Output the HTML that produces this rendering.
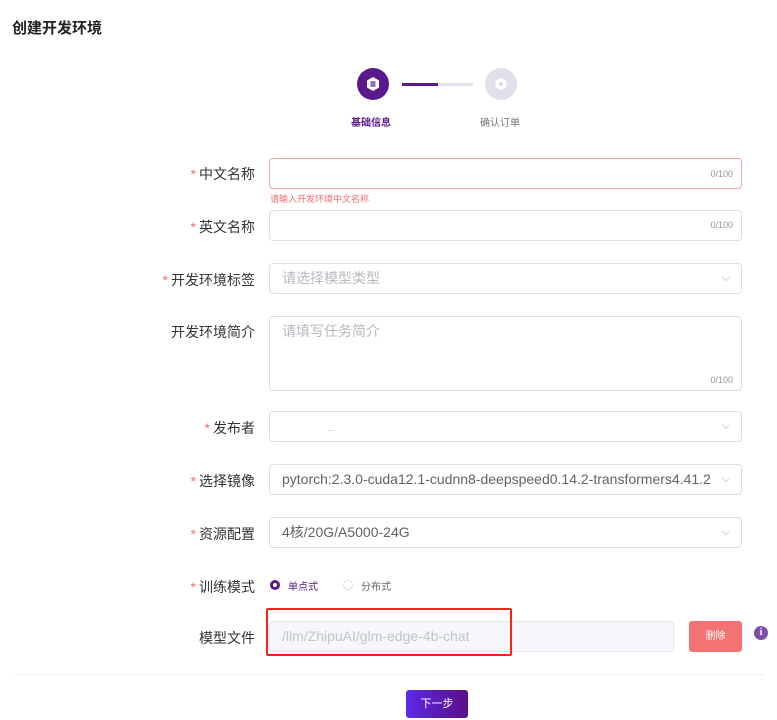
<!DOCTYPE html>
<html><head><meta charset="utf-8"><style>
*{box-sizing:border-box;margin:0;padding:0}
body{width:777px;height:720px;background:#fff;font-family:"Liberation Sans","Noto Sans CJK SC",sans-serif;position:relative;overflow:hidden;color:#333}
.a{position:absolute}
.title{left:12px;top:17px;font-size:15px;font-weight:bold;color:#222}
.lbl{font-size:14px;color:#333;text-align:right;width:200px;left:55px}
.lbl b{color:#f56c6c;font-weight:normal;margin-right:3px}
.in{left:269px;width:473px;height:31px;border:1px solid #dcdfe6;border-radius:4px;font-size:14px;color:#606266;padding:0 12px;line-height:29px;white-space:nowrap;overflow:hidden}
.ph{color:#b8b8c0}
.cnt{position:absolute;right:8px;font-size:9px;color:#909399}
.arr{position:absolute;right:12px;top:10px;width:6px;height:6px;border-right:1px solid #d4d6dc;border-bottom:1px solid #d4d6dc;transform:rotate(45deg)}
</style></head><body>
<div class="a title">创建开发环境</div>
<div class="a" style="left:357px;top:68px;width:32px;height:32px;border-radius:50%;background:#5b1a8c"></div>
<svg class="a" style="left:364px;top:75px" width="18" height="18" viewBox="0 0 18 18"><path d="M9 2 L15 5.5 V12.5 L9 16 L3 12.5 V5.5Z" fill="#fff"/><path d="M6.5 7h5M6.5 9h5M6.5 11h5" stroke="#5b1a8c" stroke-width="1.2"/></svg>
<div class="a" style="left:402px;top:83px;width:71px;height:3px;background:#e4e1ec"></div>
<div class="a" style="left:402px;top:83px;width:36px;height:3px;background:#5b1a8c"></div>
<div class="a" style="left:485px;top:68px;width:32px;height:32px;border-radius:50%;background:#e2dfea"></div>
<svg class="a" style="left:492px;top:75px" width="18" height="18" viewBox="0 0 18 18"><path d="M9 3 L14.5 6 V12 L9 15 L3.5 12 V6Z" fill="#fff"/><circle cx="9" cy="9" r="2.2" fill="#e2dfea"/></svg>
<div class="a" style="left:351px;top:114px;font-size:10px;color:#5b1a8c;font-weight:bold">基础信息</div>
<div class="a" style="left:480px;top:114px;font-size:10px;color:#777">确认订单</div>

<div class="a lbl" style="top:164px"><b>*</b>中文名称</div>
<div class="a in" style="top:158px;border-color:#f5a3a3"><span class="cnt" style="top:1px">0/100</span></div>
<div class="a" style="left:270px;top:192px;font-size:9px;color:#f56c6c">请输入开发环境中文名称</div>
<div class="a lbl" style="top:217px"><b>*</b>英文名称</div>
<div class="a in" style="top:210px"><span class="cnt">0/100</span></div>
<div class="a lbl" style="top:270px"><b>*</b>开发环境标签</div>
<div class="a in ph" style="top:263px"><span class="ph">请选择模型类型</span><i class="arr"></i></div>
<div class="a lbl" style="top:322px">开发环境简介</div>
<div class="a in" style="top:316px;height:75px;line-height:24px;padding-top:2px"><span class="ph">请填写任务简介</span><span class="cnt" style="top:57px;line-height:12px">0/100</span></div>
<div class="a lbl" style="top:418px"><b>*</b>发布者</div>
<div class="a in" style="top:411px"><span class="ph" style="margin-left:45px;font-size:10px">...</span><i class="arr"></i></div>
<div class="a lbl" style="top:471px"><b>*</b>选择镜像</div>
<div class="a in" style="top:464px;padding-right:26px">pytorch:2.3.0-cuda12.1-cudnn8-deepspeed0.14.2-transformers4.41.2<i class="arr"></i></div>
<div class="a lbl" style="top:524px"><b>*</b>资源配置</div>
<div class="a in" style="top:517px">4核/20G/A5000-24G<i class="arr"></i></div>
<div class="a lbl" style="top:577px"><b>*</b>训练模式</div>
<div class="a" style="left:270px;top:580px;width:10px;height:10px;border-radius:50%;background:#5b1a8c"></div>
<div class="a" style="left:273px;top:583px;width:4px;height:4px;border-radius:50%;background:#fff"></div>
<div class="a" style="left:288px;top:578px;font-size:10px;color:#5b1a8c">单点式</div>
<div class="a" style="left:343px;top:580px;width:10px;height:10px;border-radius:50%;border:1px solid #dcdfe6"></div>
<div class="a" style="left:361px;top:578px;font-size:10px;color:#666">分布式</div>
<div class="a lbl" style="top:628px">模型文件</div>
<div class="a in" style="top:621px;width:405px;background:#f5f7fa;border-color:#e4e7ed;color:#c0c4cc">/llm/ZhipuAI/glm-edge-4b-chat</div>
<div class="a" style="left:266px;top:608px;width:246px;height:48px;border:2px solid #ff1f1f;border-radius:2px"></div>
<div class="a" style="left:689px;top:621px;width:53px;height:31px;background:#f37373;border-radius:3px;color:#fff;font-size:10px;text-align:center;line-height:31px">删除</div>
<div class="a" style="left:754px;top:626px;width:14px;height:14px;border-radius:50%;background:#7d4ea8;color:#fff;font-size:10px;font-weight:bold;text-align:center;line-height:14px;font-family:'Liberation Serif',serif">i</div>
<div class="a" style="left:14px;top:674px;width:750px;height:1px;background:#f0ecf6"></div>
<div class="a" style="left:406px;top:690px;width:62px;height:28px;border-radius:3px;background:linear-gradient(90deg,#5a2ae6,#5c0f86);color:#fff;font-size:11px;text-align:center;line-height:28px">下一步</div>
</body></html>
